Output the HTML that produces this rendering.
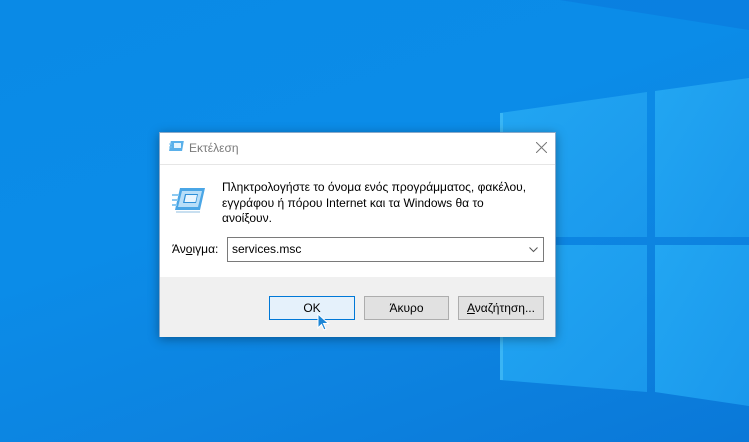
<!DOCTYPE html>
<html><head><meta charset="utf-8"><style>
*{margin:0;padding:0;box-sizing:border-box}
body{width:749px;height:442px;overflow:hidden;position:relative;font-family:"Liberation Sans","DejaVu Sans",sans-serif;font-size:12px;
background:linear-gradient(160deg,#0a8ae6 0%,#0b8ce8 40%,#0d83e0 70%,#0a78d8 100%);}
.bg2{position:absolute;left:0;top:0;width:749px;height:442px}
.dlg{position:absolute;left:159px;top:132px;width:397px;height:205px;background:#fff;border:1px solid #8aa9c9;box-shadow:0 2px 10px rgba(0,0,0,.35)}
.title{position:absolute;left:29px;top:8px;color:#7a7a7a;font-size:12px}
.sep{position:absolute;left:0;top:31px;width:100%;height:1px;background:#e6e6e6}
.msg{position:absolute;left:62px;top:47px;line-height:15.5px;color:#000;width:318px}
.lbl{position:absolute;left:12px;top:109px}
.inp{position:absolute;left:67px;top:104px;width:317px;height:25px;border:1px solid #7a7a7a;padding:4px 4px}
.gray{position:absolute;left:0;top:144px;width:100%;height:60px;background:#f0f0f0}
.btn{position:absolute;top:163px;height:24px;border:1px solid #adadad;background:#e1e1e1;text-align:center;line-height:22px}
</style></head><body>
<svg class="bg2" viewBox="0 0 749 442">
<defs><linearGradient id="p" x1="0" y1="0" x2="1" y2="1"><stop offset="0" stop-color="#22a6f2"/><stop offset="1" stop-color="#1a98ec"/></linearGradient></defs>
<polygon points="560,0 749,0 749,30" fill="#0a6fd6" opacity=".4"/>
<polygon points="500,113 647,92 647,237 500,237" fill="url(#p)"/>
<polygon points="655,91 749,78 749,237 655,237" fill="url(#p)"/>
<polygon points="500,245 647,245 647,392 500,380" fill="url(#p)"/>
<polygon points="655,245 749,245 749,406 655,392" fill="url(#p)"/>
<polygon points="500,113 503,113 503,380 500,380" fill="#46bdf7" opacity=".7"/>
</svg>
<div class="dlg">
<svg style="position:absolute;left:9px;top:7px" width="16" height="14" viewBox="0 0 16 14"><rect x="2" y="1" width="13" height="10" fill="#5ab0ea" transform="skewX(-10)"/><rect x="5" y="3" width="7" height="5" fill="#e6f4fd"/><line x1="0" y1="4" x2="3" y2="4" stroke="#7cc4f0"/><line x1="0" y1="7" x2="3" y2="7" stroke="#7cc4f0"/></svg>
<div class="title">Εκτέλεση</div>
<svg style="position:absolute;left:376px;top:9px" width="11" height="11"><path d="M0 0L11 11M11 0L0 11" stroke="#777" stroke-width="1"/></svg>
<div class="sep"></div>
<svg style="position:absolute;left:12px;top:53px" width="34" height="28" viewBox="0 0 34 28"><polygon points="8,2 33,2 28,24 3,24" fill="#4aa6e6"/><polygon points="10,5 30,5 26,21 6,21" fill="#b8def8"/><polygon points="13,8 26,8 24,17 11,17" fill="#2d8fd8"/><polygon points="14,9 25,9 23.5,16 12.5,16" fill="#e8f5fe"/><line x1="0" y1="9" x2="7" y2="9" stroke="#8cc9f1" stroke-width="2"/><line x1="0" y1="14" x2="6" y2="14" stroke="#8cc9f1" stroke-width="2"/><line x1="0" y1="19" x2="5" y2="19" stroke="#8cc9f1" stroke-width="2"/><rect x="4" y="25" width="24" height="2" fill="#c8dff0"/></svg>
<div class="msg">Πληκτρολογήστε το όνομα ενός προγράμματος, φακέλου, εγγράφου ή πόρου Internet και τα Windows θα το<br>ανοίξουν.</div>
<div class="lbl">Άν<u>ο</u>ιγμα:</div>
<div class="inp">services.msc<svg style="position:absolute;right:5px;top:9px" width="9" height="6"><path d="M0.5 0.5L4.5 4.5L8.5 0.5" stroke="#555" fill="none"/></svg></div>
<div class="gray"></div>
<div class="btn" style="left:109px;width:86px;background:#e5f1fb;border:1px solid #0078d7">OK</div>
<div class="btn" style="left:204px;width:85px">Άκυρο</div>
<div class="btn" style="left:298px;width:86px"><u>Α</u>ναζήτηση...</div>
<svg style="position:absolute;left:157px;top:180px" width="14" height="20" viewBox="0 0 14 20"><path d="M1 1L1 15L4.5 11.5L7 17L9 16L6.5 10.5L11.5 10.5Z" fill="#1d86d6" stroke="#fff" stroke-width="1"/></svg>
</div>
</body></html>
